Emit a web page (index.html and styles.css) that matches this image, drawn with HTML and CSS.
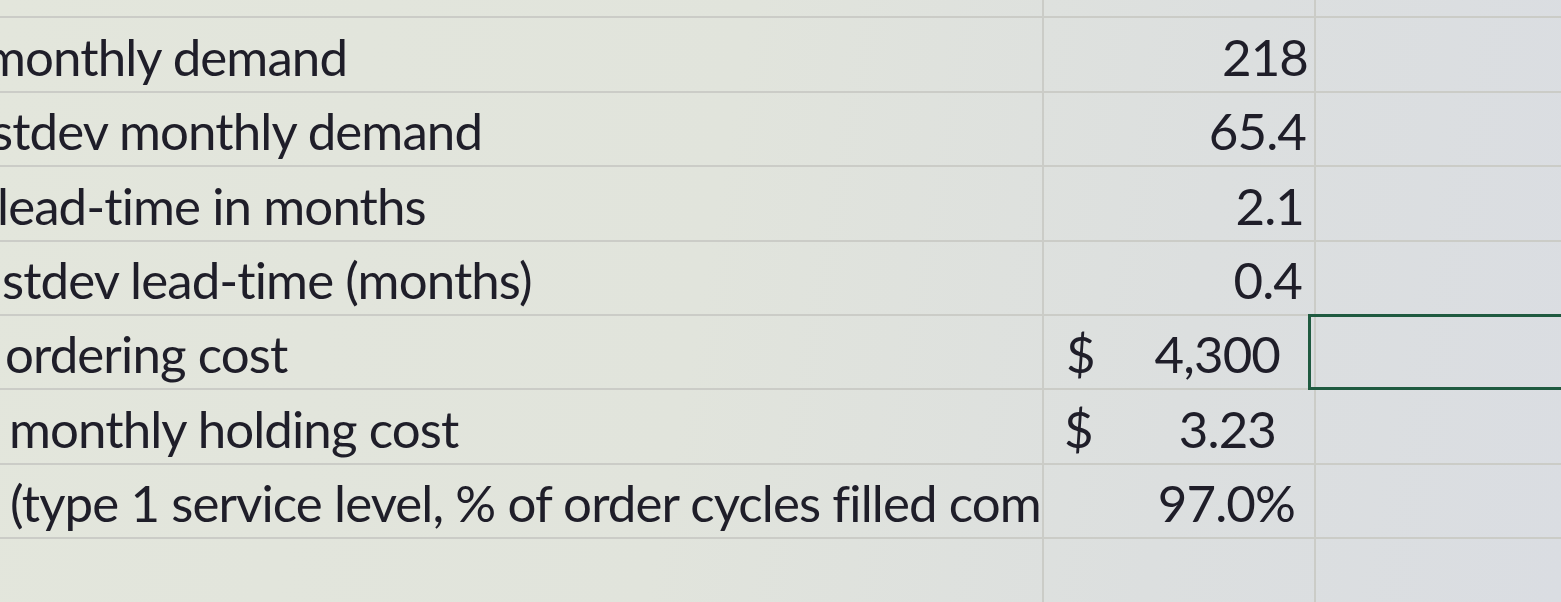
FILE: index.html
```html
<!DOCTYPE html>
<html>
<head>
<meta charset="utf-8">
<link rel="stylesheet" href="styles.css">
</head>
<body>
<div class="sheet">
  <div class="row r0"><div class="cell a"></div><div class="cell b"></div><div class="cell c"></div></div>
  <div class="row r1"><div class="cell a"><span class="lbl">monthly demand</span></div><div class="cell b num"><span>218</span></div><div class="cell c"></div></div>
  <div class="row r2"><div class="cell a"><span class="lbl">stdev monthly demand</span></div><div class="cell b num"><span>65.4</span></div><div class="cell c"></div></div>
  <div class="row r3"><div class="cell a"><span class="lbl">lead-time in months</span></div><div class="cell b num"><span>2.1</span></div><div class="cell c"></div></div>
  <div class="row r4"><div class="cell a"><span class="lbl">stdev lead-time (months)</span></div><div class="cell b num"><span>0.4</span></div><div class="cell c"></div></div>
  <div class="row r5"><div class="cell a"><span class="lbl">ordering cost</span></div><div class="cell b acct"><span class="cur">$</span><span class="amt">4,300</span></div><div class="cell c selected"></div></div>
  <div class="row r6"><div class="cell a"><span class="lbl">monthly holding cost</span></div><div class="cell b acct"><span class="cur">$</span><span class="amt">3.23</span></div><div class="cell c"></div></div>
  <div class="row r7"><div class="cell a"><span class="lbl">(type 1 service level, % of order cycles filled completely)</span></div><div class="cell b num pct"><span>97.0%</span></div><div class="cell c"></div></div>
  <div class="row r8"><div class="cell a"></div><div class="cell b"></div><div class="cell c"></div></div>
</div>
</body>
</html>
```
FILE: styles.css
```css
html, body {
  margin: 0;
  padding: 0;
  width: 1561px;
  height: 602px;
  overflow: hidden;
}
body {
  background: linear-gradient(100deg, #e3e6dc 0%, #e1e4dc 45%, #dcdfdf 75%, #dadde2 100%);
  font-family: "Lato", "Open Sans", "DejaVu Sans", sans-serif;
  color: #1f1e29;
}
.sheet {
  display: flex;
  flex-direction: column;
  margin-top: -56px;
}
.row {
  display: grid;
  grid-template-columns: 1044px 272px 1fr;
  height: 74.4px;
  border-bottom: 2px solid #cbccc7;
  box-sizing: border-box;
}
.cell {
  display: flex;
  align-items: flex-end;
  overflow: hidden;
  white-space: nowrap;
  border-right: 2px solid #cbccc7;
  padding-bottom: 9px;
  box-sizing: border-box;
  font-size: 51px;
  line-height: 1;
  letter-spacing: -0.9px;
}
.cell.c { border-right: none; }
.lbl { display: block; }
.r1 .lbl { margin-left: -16px; }
.r2 .lbl { margin-left: -9px; }
.r3 .lbl { margin-left: -3px; }
.r4 .lbl { margin-left: 2px; }
.r5 .lbl { margin-left: 5px; }
.r6 .lbl { margin-left: 9px; }
.r7 .lbl { margin-left: 10px; }
.num { justify-content: flex-end; padding-right: 6px; }
.r2 .num { padding-right: 8px; }
.r3 .num { padding-right: 10px; }
.r4 .num { padding-right: 12px; }
.pct { padding-right: 19px; }
.acct { justify-content: space-between; padding-left: 22px; padding-right: 34px; }
.r6 .acct { padding-left: 20px; padding-right: 38px; }
.selected {
  border: 3px solid #1f5a40;
  border-right: none;
  margin: -2px 0 -2px -8px;
}
```
